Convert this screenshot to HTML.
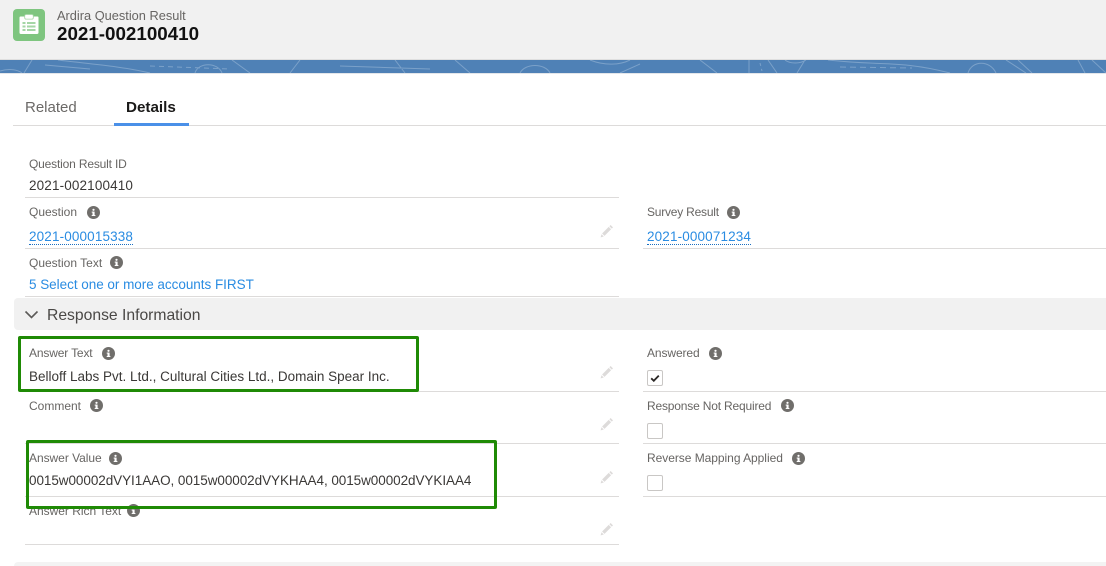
<!DOCTYPE html>
<html>
<head>
<meta charset="utf-8">
<style>
html,body{margin:0;padding:0;width:1106px;height:566px;overflow:hidden;background:#fff}
body{position:relative;font-family:"Liberation Sans",sans-serif;color:#2b2826}
.t{position:absolute;white-space:nowrap;line-height:16px}
.l{font-size:12px;color:#676563}
.v{font-size:13.5px;color:#3a3836}
.a{font-size:13.5px;color:#2a8ce2}
.d{position:absolute;height:0;border-bottom:1px dotted #1b6fc0}
.h{position:absolute;height:1px;background:#dddbda}
.i{position:absolute;width:13px;height:13px}
.p{position:absolute;width:14px;height:14px}
.c{position:absolute;left:647px;width:14px;height:14px;border:1px solid #c9c7c5;border-radius:2px;background:#fff}
.g{position:absolute;border:3px solid #1f8a05;border-radius:2px;box-sizing:border-box}
</style>
</head>
<body>
<svg width="0" height="0" style="position:absolute">
<defs>
<symbol id="info" viewBox="0 0 13 13"><circle cx="6.5" cy="6.5" r="6.5" fill="#706e6b"/><rect x="5.5" y="5.6" width="2.1" height="4.3" fill="#fff"/><rect x="4.7" y="5.6" width="2" height="1" fill="#fff"/><rect x="4.7" y="9" width="3.7" height="1" fill="#fff"/><circle cx="6.5" cy="3.8" r="1.1" fill="#fff"/></symbol>
<symbol id="pen" viewBox="0 0 14 14"><path d="M10.6 1l2.4 2.4-1.2 1.2-2.4-2.4zM8.7 2.9l2.4 2.4-6.6 6.6-2.4-2.4zM1.5 10.2l2.3 2.3-3.2.9z" fill="#dddbda"/></symbol>
</defs>
</svg>

<div style="position:absolute;left:0;top:0;width:1106px;height:60px;background:#f1f1f1;border-bottom:1px solid #dfdfdf;box-sizing:border-box"></div>
<svg style="position:absolute;left:0;top:60px" width="1106" height="13" viewBox="0 0 1106 13">
<rect width="1106" height="13" fill="#4f81b6"/>
<g fill="none" stroke="#7ba1c9" stroke-width="1">
<path d="M0 11C10 8 18 10 22 13M32 0L24 13M45 5L90 9M58 0C90 4 120 6 150 13M195 13C198 2 218 2 222 13M232 0L250 13M300 0L290 13M340 6L430 9M395 0L405 13M455 0L470 13M520 13C525 3 545 3 550 13M590 0C605 6 620 5 630 0M620 13L640 4M700 0L717 13M749 0L749 13M768 0L777 13M785 0C790 4 800 4 806 0M805 0L797 13M828 0C880 6 900 0 950 13M968 13C972 0 990 0 996 13M1006 0L1026 13M1018 0L1032 13M1078 0L1085 13M1092 0L1106 13"/>
<path d="M840 7L912 8" stroke-dasharray="6 4"/>
<path d="M760 3L762 11" stroke-dasharray="3 3"/>
<path d="M150 6L230 9" stroke-dasharray="5 4"/>
</g>
</svg>
<div style="position:absolute;left:0;top:73px;width:1106px;height:1px;background:#e3e6ea"></div>

<!-- header icon -->
<div style="position:absolute;left:13px;top:9px;width:32px;height:32px;border-radius:4px;background:#7ec57f"></div>
<svg style="position:absolute;left:13px;top:9px" width="32" height="32" viewBox="0 0 32 32">
<path d="M7.5 7.5h17a1 1 0 0 1 1 1v15a1.5 1.5 0 0 1-1.5 1.5H8a1.5 1.5 0 0 1-1.5-1.5v-15a1 1 0 0 1 1-1z" fill="#fff"/>
<rect x="11.7" y="5.5" width="8.6" height="4.6" rx="1.4" fill="#fff" stroke="#a5d6a6" stroke-width=".8"/>
<g fill="#a5d6a6"><rect x="9.5" y="13" width="3" height="2"/><rect x="14" y="13" width="8.5" height="2"/><rect x="9.5" y="16.5" width="3" height="2"/><rect x="14" y="16.5" width="8.5" height="2"/><rect x="9.5" y="20" width="3" height="2"/><rect x="14" y="20" width="8.5" height="2"/></g>
</svg>
<div class="t" style="left:57px;top:8px;font-size:12.8px;color:#676563">Ardira Question Result</div>
<div class="t" style="left:57px;top:24px;font-size:18.8px;font-weight:bold;color:#111;line-height:20px">2021-002100410</div>

<!-- tabs -->
<div class="t" style="left:25px;top:100px;font-size:15px;color:#6b6967">Related</div>
<div class="t" style="left:126px;top:100px;font-size:15.2px;font-weight:bold;color:#1a1918">Details</div>
<div class="h" style="left:13px;top:125px;width:1093px"></div>
<div style="position:absolute;left:114px;top:123px;width:75px;height:3px;background:#4a90e8"></div>

<!-- top fields -->
<div class="t l" style="left:29px;top:156px;letter-spacing:-.17px">Question Result ID</div>
<div class="t v" style="left:29px;top:178px;letter-spacing:.14px">2021-002100410</div>
<div class="h" style="left:25px;top:197px;width:594px"></div>

<div class="t l" style="left:29px;top:204px">Question</div>
<svg class="i" style="left:87px;top:206px"><use href="#info"/></svg>
<div class="t a" style="left:29px;top:229px;letter-spacing:.14px">2021-000015338</div>
<div class="d" style="left:29px;top:244px;width:104px"></div>
<svg class="p" style="left:600px;top:224px"><use href="#pen"/></svg>
<div class="h" style="left:25px;top:248px;width:594px"></div>

<div class="t l" style="left:647px;top:204px;letter-spacing:-.22px">Survey Result</div>
<svg class="i" style="left:727px;top:206px"><use href="#info"/></svg>
<div class="t a" style="left:647px;top:229px;letter-spacing:.14px">2021-000071234</div>
<div class="d" style="left:647px;top:244px;width:104px"></div>
<div class="h" style="left:643px;top:248px;width:463px"></div>

<div class="t l" style="left:29px;top:255px">Question Text</div>
<svg class="i" style="left:110px;top:256px"><use href="#info"/></svg>
<div class="t a" style="left:29px;top:277px;letter-spacing:-.03px">5 Select one or more accounts FIRST</div>
<div class="h" style="left:25px;top:296px;width:594px"></div>

<!-- section -->
<div style="position:absolute;left:14px;top:298px;width:1092px;height:32px;background:#f1f1f1;border-radius:4px 0 0 4px"></div>
<svg style="position:absolute;left:24px;top:309px" width="15" height="11" viewBox="0 0 15 11"><path d="M1.5 2.5L7.5 8.5L13.5 2.5" fill="none" stroke="#5c5a58" stroke-width="1.6"/></svg>
<div class="t" style="left:47px;top:307px;font-size:15.7px;color:#4a4846;line-height:18px">Response Information</div>

<!-- answer text -->
<div class="t l" style="left:29px;top:345px;letter-spacing:-.15px">Answer Text</div>
<svg class="i" style="left:102px;top:347px"><use href="#info"/></svg>
<div class="t v" style="left:29px;top:369px">Belloff Labs Pvt. Ltd., Cultural Cities Ltd., Domain Spear Inc.</div>
<svg class="p" style="left:600px;top:365px"><use href="#pen"/></svg>
<div class="h" style="left:25px;top:391px;width:594px"></div>

<div class="t l" style="left:647px;top:345px;letter-spacing:-.1px">Answered</div>
<svg class="i" style="left:709px;top:347px"><use href="#info"/></svg>
<div class="c" style="top:370px"></div>
<svg style="position:absolute;left:647px;top:370px" width="16" height="16" viewBox="0 0 16 16"><path d="M4.2 8.3L6.8 10.8L11.8 5.6" fill="none" stroke="#2b2826" stroke-width="1.8"/></svg>
<div class="h" style="left:643px;top:391px;width:463px"></div>

<div class="t l" style="left:29px;top:398px">Comment</div>
<svg class="i" style="left:90px;top:399px"><use href="#info"/></svg>
<svg class="p" style="left:600px;top:417px"><use href="#pen"/></svg>
<div class="h" style="left:25px;top:443px;width:594px"></div>

<div class="t l" style="left:647px;top:398px;letter-spacing:-.18px">Response Not Required</div>
<svg class="i" style="left:781px;top:399px"><use href="#info"/></svg>
<div class="c" style="top:423px"></div>
<div class="h" style="left:643px;top:443px;width:463px"></div>

<div class="t l" style="left:29px;top:450px;letter-spacing:-.04px">Answer Value</div>
<svg class="i" style="left:109px;top:452px"><use href="#info"/></svg>
<div class="t v" style="left:29px;top:473px;letter-spacing:-.06px">0015w00002dVYI1AAO, 0015w00002dVYKHAA4, 0015w00002dVYKIAA4</div>
<svg class="p" style="left:600px;top:470px"><use href="#pen"/></svg>
<div class="h" style="left:25px;top:496px;width:594px"></div>

<div class="t l" style="left:647px;top:450px;letter-spacing:-.04px">Reverse Mapping Applied</div>
<svg class="i" style="left:792px;top:452px"><use href="#info"/></svg>
<div class="c" style="top:475px"></div>
<div class="h" style="left:643px;top:496px;width:463px"></div>

<div class="t l" style="left:29px;top:503px;letter-spacing:-.02px">Answer Rich Text</div>
<svg class="i" style="left:127px;top:504px"><use href="#info"/></svg>
<svg class="p" style="left:600px;top:522px"><use href="#pen"/></svg>
<div class="h" style="left:25px;top:544px;width:594px"></div>

<!-- green highlight boxes -->
<div class="g" style="left:18px;top:336px;width:401px;height:56px"></div>
<div class="g" style="left:26px;top:440px;width:471px;height:69px"></div>

<div style="position:absolute;left:14px;top:562px;width:1092px;height:4px;background:#f3f3f3;border-radius:4px 0 0 0"></div>
</body>
</html>
